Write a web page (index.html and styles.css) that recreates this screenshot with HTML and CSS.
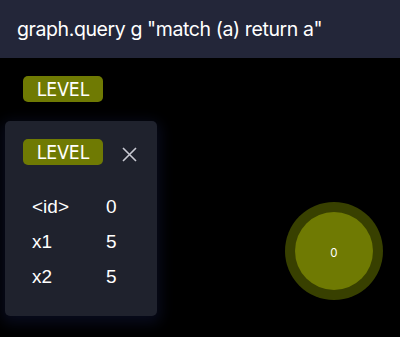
FILE: index.html
```html
<!DOCTYPE html>
<html lang="en">
  <head>
    <meta charset="UTF-8" />
    <title>graph</title>
    <link rel="stylesheet" href="styles.css">
  </head>
  <body>
    <div class="header">graph.query g "match (a) return a"</div>
    <div class="canvas">
      <div class="legend">
        <span class="badge">LEVEL</span>
      </div>
      <div class="node">
        <div class="node-inner">0</div>
      </div>
      <div class="panel">
        <div class="panel-top">
          <span class="badge">LEVEL</span>
          <svg class="close" width="15" height="15" viewBox="0 0 15 15">
            <path d="M1 1L14 14M14 1L1 14" stroke="#c9cad3" stroke-width="1.6" fill="none" />
          </svg>
        </div>
        <table class="props">
          <tr><td>&lt;id&gt;</td><td>0</td></tr>
          <tr><td>x1</td><td>5</td></tr>
          <tr><td>x2</td><td>5</td></tr>
        </table>
      </div>
    </div>
  </body>
</html>
```

FILE: styles.css
```css
html,
body {
  margin: 0;
  height: 100%;
  background-color: #000;
  overflow: hidden;
}

body {
  font-family: Inter, "Noto Sans", sans-serif;
  color: #fff;
}

.header {
  height: 58px;
  box-sizing: border-box;
  padding-left: 17px;
  display: flex;
  align-items: center;
  background-color: #232639;
  font-size: 19.5px;
  letter-spacing: -0.4px;
}

.canvas {
  position: relative;
  height: calc(100% - 58px);
}

.legend {
  padding: 18px 0 0 23px;
}

.badge {
  display: inline-flex;
  align-items: center;
  justify-content: center;
  width: 80px;
  height: 26px;
  border-radius: 5px;
  background-color: #6f7a03;
  font-family: "Liberation Sans Narrow", "DejaVu Sans Condensed", sans-serif;
  font-size: 19px;
  color: #fff;
}

.panel {
  position: absolute;
  left: 5px;
  top: 63px;
  width: 152px;
  height: 195px;
  box-sizing: border-box;
  padding: 18px 0 0 18px;
  border-radius: 5px;
  background-color: #1f222d;
  box-shadow: 0 4px 14px 4px rgba(12, 16, 40, 0.7);
}

.panel-top {
  display: flex;
  align-items: center;
}

.close {
  margin: 4px 0 0 19px;
}

.props {
  margin: 24px 0 0 9px;
  border-collapse: collapse;
  font-family: "Liberation Sans", Arial, sans-serif;
  font-size: 19px;
}

.props td {
  padding: 0;
  height: 35px;
}

.props td:first-child {
  width: 74px;
}

.node {
  position: absolute;
  left: 285px;
  top: 144px;
  width: 98px;
  height: 98px;
  border-radius: 50%;
  background-color: #384000;
  display: flex;
  align-items: center;
  justify-content: center;
}

.node-inner {
  width: 78px;
  height: 78px;
  border-radius: 50%;
  background-color: #6f7a03;
  display: flex;
  align-items: center;
  justify-content: center;
  font-size: 11.5px;
  padding-top: 3px;
  box-sizing: border-box;
}
```
